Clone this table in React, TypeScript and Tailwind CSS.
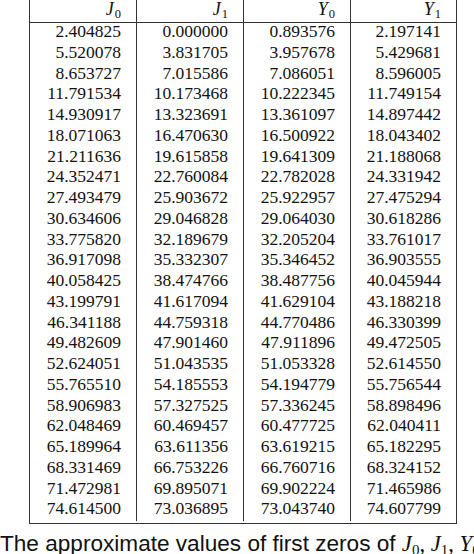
import React from "react";

const rows: string[][] = [
  ["2.404825", "0.000000", "0.893576", "2.197141"],
  ["5.520078", "3.831705", "3.957678", "5.429681"],
  ["8.653727", "7.015586", "7.086051", "8.596005"],
  ["11.791534", "10.173468", "10.222345", "11.749154"],
  ["14.930917", "13.323691", "13.361097", "14.897442"],
  ["18.071063", "16.470630", "16.500922", "18.043402"],
  ["21.211636", "19.615858", "19.641309", "21.188068"],
  ["24.352471", "22.760084", "22.782028", "24.331942"],
  ["27.493479", "25.903672", "25.922957", "27.475294"],
  ["30.634606", "29.046828", "29.064030", "30.618286"],
  ["33.775820", "32.189679", "32.205204", "33.761017"],
  ["36.917098", "35.332307", "35.346452", "36.903555"],
  ["40.058425", "38.474766", "38.487756", "40.045944"],
  ["43.199791", "41.617094", "41.629104", "43.188218"],
  ["46.341188", "44.759318", "44.770486", "46.330399"],
  ["49.482609", "47.901460", "47.911896", "49.472505"],
  ["52.624051", "51.043535", "51.053328", "52.614550"],
  ["55.765510", "54.185553", "54.194779", "55.756544"],
  ["58.906983", "57.327525", "57.336245", "58.898496"],
  ["62.048469", "60.469457", "60.477725", "62.040411"],
  ["65.189964", "63.611356", "63.619215", "65.182295"],
  ["68.331469", "66.753226", "66.760716", "68.324152"],
  ["71.472981", "69.895071", "69.902224", "71.465986"],
  ["74.614500", "73.036895", "73.043740", "74.607799"],
];

const headers: [string, string][] = [
  ["J", "0"],
  ["J", "1"],
  ["Y", "0"],
  ["Y", "1"],
];

const cellBase = "flex justify-end pr-[15px]";

export default function App() {
  return (
    <div className="w-[474px] h-[554px] overflow-hidden bg-white text-[#111]">
      <div
        className="ml-[29px] w-[428px] border-x border-b border-[#333] pb-[2px]"
        style={{ fontFamily: '"Liberation Serif", "Times New Roman", serif' }}
      >
        <div className="grid grid-cols-[107px_107px_107px_105px] h-[23px] border-b border-[#333]">
          {headers.map(([l, s], i) => (
            <div
              key={i}
              className={`${cellBase} items-end ${i < 3 ? "border-r border-[#333]" : ""}`}
            >
              <span className="text-[18px] leading-[18px] italic mb-[4px]">
                {l}
                <span className="not-italic text-[12.5px] relative top-[3px] ml-[1px]">{s}</span>
              </span>
            </div>
          ))}
        </div>
        {rows.map((r, ri) => (
          <div key={ri} className="grid grid-cols-[107px_107px_107px_105px] h-[20.75px]">
            {r.map((v, i) => (
              <div
                key={i}
                className={`${cellBase} text-[17.5px] leading-[16px] ${i < 3 ? "border-r border-[#333]" : ""}`}
              >
                {v}
              </div>
            ))}
          </div>
        ))}
      </div>
      <div
        className="mt-[7px] whitespace-nowrap text-[22.6px] leading-[25px] text-[#111]"
        style={{ fontFamily: '"Liberation Sans", Arial, sans-serif' }}
      >
        The approximate values of first zeros of{" "}
        <span style={{ fontFamily: '"Liberation Serif", "Times New Roman", serif' }}>
          <span className="italic">J</span>
          <sub className="text-[15px]">0</sub>,{" "}
          <span className="italic">J</span>
          <sub className="text-[15px]">1</sub>,{" "}
          <span className="italic">Y</span>
          <sub className="text-[15px]">0</sub> and{" "}
          <span className="italic">Y</span>
          <sub className="text-[15px]">1</sub>.
        </span>
      </div>
    </div>
  );
}
